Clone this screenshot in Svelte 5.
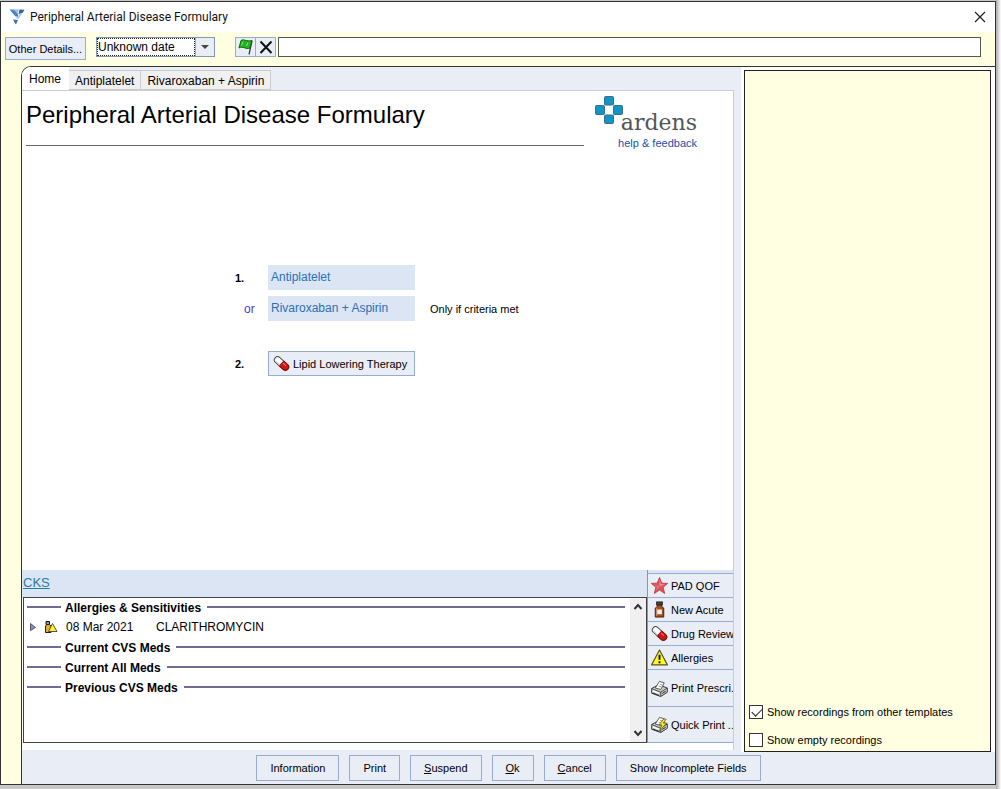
<script>
  let date = $state('Unknown date');
  let note = $state('');
  let showOther = $state(true);
  let showEmpty = $state(false);

  const tabs = ['Home', 'Antiplatelet', 'Rivaroxaban + Aspirin'];
  let active = $state('Home');

  const groups = [
    { title: 'Allergies & Sensitivities', items: [{ date: '08 Mar 2021', name: 'CLARITHROMYCIN' }] },
    { title: 'Current CVS Meds', items: [] },
    { title: 'Current All Meds', items: [] },
    { title: 'Previous CVS Meds', items: [] }
  ];

  const actions = [
    { icon: 'star', label: 'PAD QOF' },
    { icon: 'bottle', label: 'New Acute' },
    { icon: 'pill', label: 'Drug Review' },
    { icon: 'warning', label: 'Allergies' },
    { icon: 'printer', label: 'Print Prescri.', tall: true },
    { icon: 'quick', label: 'Quick Print ..', tall: true }
  ];

  const commands = [
    { rest: 'Information' },
    { rest: 'Print' },
    { key: 'S', rest: 'uspend' },
    { key: 'O', rest: 'k' },
    { key: 'C', rest: 'ancel' },
    { rest: 'Show Incomplete Fields' }
  ];
</script>

{#snippet icon(name)}
  <svg class="icon" viewBox="0 0 18 18" aria-hidden="true">
    {#if name === 'star'}
      <path d="M9 .5 11.400 6.500 17.700 6.800 12.800 10.900 14.500 17.400 9 13.800 3.500 17.400 5.200 10.900.3 6.800 6.600 6.500Z" fill="#e0525a" stroke="#b23b44" stroke-width=".9" />
      <path d="M9 2.500 10.500 7.500 15 7.800 9 10Z" fill="#ee8d90" />
      <path d="M9 10 5.200 15 6.300 10.800 2.800 7.900Z" fill="#ea7478" />
    {:else if name === 'bottle'}
      <rect x="6" y="1" width="6" height="3" fill="#444" stroke="#222" />
      <path d="M6.500 4.500h5v1.500l2 1.500v9.500h-9v-9.500l2-1.500Z" fill="#a4501e" stroke="#3b2010" />
      <rect x="6.500" y="9" width="5" height="5" fill="#f4f4f4" />
      <path d="M6 7v9" stroke="#e0905c" />
    {:else if name === 'pill'}
      <g transform="rotate(42 9 9)">
        <rect x="0" y="5.500" width="18" height="7" rx="3.500" fill="#fff" stroke="#444" />
        <path d="M9 5.500h5.500a3.500 3.500 0 0 1 0 7H9Z" fill="#d81313" stroke="#7c1010" />
        <path d="M10 7.500h4" stroke="#ff7777" />
        <path d="M3 11.500h6" stroke="#bbb" />
      </g>
    {:else if name === 'warning'}
      <path d="M9 1 17.400 16.800H.6Z" fill="#fff52e" stroke="#55551a" stroke-linejoin="round" stroke-width="1.200" />
      <path d="M9 6v5.500M9 13v2" stroke="#111" stroke-width="2" />
    {:else}
      <path d="M.7 9 8 5l9.300 3.500v4.500l-7 4.500L.7 14Z" fill="#c9c9c5" stroke="#333" stroke-linejoin="round" />
      <path d="m.7 9 9.600 4 7-4.500M10.300 13v4.500" fill="none" stroke="#444" />
      <path d="m4.500 8.500 4.500-7 5 1.500-3.500 7Z" fill="#fff" stroke="#555" stroke-linejoin="round" />
      <path d="m8 6.500 3 1M9.500 4.500l3 1" stroke="#999" />
      <path d="m2 11.500 6.500 2.700" stroke="#fff" stroke-width="1.500" />
      <path d="m2 13.800 6.500 2.500M12 14.200l3.500-2.200" stroke="#222" />
      {#if name === 'quick'}
        <path d="m13.500 3-5 6.500h3l-2.500 6.500 7.500-8.500h-3.500l3-4Z" fill="#ffe92e" stroke="#5a5210" stroke-width=".8" />
      {/if}
    {/if}
  </svg>
{/snippet}

<div class="page">
  <div class="window">
    <header class="titlebar">
      <svg class="app-icon" viewBox="0 0 16 16" aria-hidden="true">
        <path d="M.5.5H5L9 5v3L6 7Z" fill="#4b86c4" />
        <path d="M5 .5h5L8.500 4Z" fill="#8fbde6" />
        <path d="M10.500.5 15.500.8 13.500 4 9.500 5Z" fill="#2f66ab" />
        <path d="m6 7 3 1 1-3 3-.5-3 5-2 .5Z" fill="#a9cdec" />
        <path d="m4 10.500 5 .5-2 4.500-1.500-2Z" fill="#3d74b4" />
      </svg>
      <span class="caption">Peripheral Arterial Disease Formulary</span>
      <button class="close" aria-label="Close">
        <svg viewBox="0 0 12 12"><path d="m1 1 10 10M11 1 1 11" stroke="#222" stroke-width="1.200" /></svg>
      </button>
    </header>

    <div class="toolbar">
      <button class="btn details">Other Details...</button>
      <div class="picker">
        <select aria-label="Date" bind:value={date}>
          <option>Unknown date</option>
        </select>
        <span class="arrow"></span>
      </div>
      <div class="pair">
        <button class="btn tool" aria-label="Flag">
          <svg viewBox="0 0 18 18">
            <path d="M15 3 12 16.500" stroke="#333" stroke-width="1.200" />
            <path d="M4 2.500c3-2 5 1.500 11 0L13 10C9 12 6 7.500 2 10Z" fill="#20b520" stroke="#116011" />
            <path d="M6 3.500 4.500 7.500M11 4.500 9.500 8" stroke="#7fe67f" />
          </svg>
        </button>
        <button class="btn tool" aria-label="Clear">
          <svg viewBox="0 0 18 18"><path d="m3.500 3.500 11 11.500M14.500 3.500l-11 11.500" stroke="#111" stroke-width="2" /></svg>
        </button>
      </div>
      <input class="note" type="text" aria-label="Note" bind:value={note} />
    </div>

    <div class="body">
      <div class="work">
        <main class="left">
          <div class="tabs" role="tablist">
            {#each tabs as tab}
              <button role="tab" class="tab" class:active={active === tab} aria-selected={active === tab} onclick={() => (active = tab)}>{tab}</button>
            {/each}
          </div>

          <div class="sheet">
            <div class="head">
              <h1>Peripheral Arterial Disease Formulary</h1>
              <a class="brand" href="#help">
                <svg class="cross" viewBox="0 0 28 28" aria-hidden="true">
                  <g fill="#1593c4" stroke="#34718c">
                    <rect x="9.500" y=".5" width="9" height="8.500" rx="1" />
                    <rect x=".5" y="9.500" width="9" height="9" rx="1" />
                    <rect x="18.500" y="9.500" width="9" height="9" rx="1" />
                    <rect x="9.500" y="19" width="9" height="8.500" rx="1" />
                  </g>
                </svg>
                <span class="words">
                  <span class="name">ardens</span>
                  <span class="help">help &amp; feedback</span>
                </span>
              </a>
            </div>

            <div class="steps">
              <b>1.</b>
              <a class="link" href="#antiplatelet">Antiplatelet</a>
              <span></span>
              <span class="or">or</span>
              <a class="link" href="#rivaroxaban">Rivaroxaban + Aspirin</a>
              <span class="hint">Only if criteria met</span>
              <b class="second">2.</b>
              <button class="btn therapy second">{@render icon('pill')}Lipid Lowering Therapy</button>
            </div>

            <div class="dock">
              <section class="record">
                <div class="cks"><a href="#cks">CKS</a></div>
                <div class="meds">
                  <div class="list">
                    {#each groups as group}
                      <h2>{group.title}</h2>
                      {#each group.items as item}
                        <div class="entry">
                          <svg class="expand" viewBox="0 0 6 8" aria-hidden="true"><path d="M.5.5 5.500 4.500.5 7.500Z" fill="#8d8db5" stroke="#55557a" /></svg>
                          <svg class="allergy" viewBox="0 0 14 14" aria-hidden="true">
                            <path d="M2 1.500h3.500v3H2Z" fill="#999" stroke="#111" />
                            <path d="M1.500 12.500V6l1.500-1.500h2.500L7 6v6.500Z" fill="#e2ac36" stroke="#222" />
                            <path d="m8.500 3.500 4.500 8H4.500Z" fill="#fff22a" stroke="#554" />
                          </svg>
                          <span class="when">{item.date}</span>
                          <span>{item.name}</span>
                        </div>
                      {/each}
                    {/each}
                  </div>
                  <div class="scroll">
                    <svg viewBox="0 0 10 8"><path d="m1.500 6 3.500-4 3.500 4" fill="none" stroke="#333" stroke-width="2" /></svg>
                    <svg viewBox="0 0 10 8"><path d="m1.500 2 3.500 4 3.500-4" fill="none" stroke="#333" stroke-width="2" /></svg>
                  </div>
                </div>
              </section>
              <nav class="actions">
                {#each actions as action}
                  <button class:tall={action.tall}>{@render icon(action.icon)}<span>{action.label}</span></button>
                {/each}
              </nav>
            </div>
          </div>
        </main>

        <aside class="recordings">
          <label><input type="checkbox" bind:checked={showOther} />Show recordings from other templates</label>
          <label><input type="checkbox" bind:checked={showEmpty} />Show empty recordings</label>
        </aside>
      </div>

      <footer class="commands">
        {#each commands as command}
          <button class="btn command">{#if command.key}<u>{command.key}</u>{/if}{command.rest}</button>
        {/each}
      </footer>
    </div>
  </div>
</div>

<style>
  :global(body) { margin: 0; background: #fff; }
  * { box-sizing: border-box; }
  button, input, select { font: inherit; color: inherit; margin: 0; }
  .page {
    height: 100vh;
    min-height: 560px;
    padding: 1px 5px 4px 0;
    background: linear-gradient(to right, #aaa 0, #fff 5px) right / 5px 100% no-repeat, #c8c8c8;
    font: 11px/14px "Liberation Sans", Arial, sans-serif;
    color: #000;
  }
  .window {
    height: 100%;
    display: flex;
    flex-direction: column;
    border: 1px solid #333;
    background: #ffffe1;
  }
  .titlebar {
    display: flex;
    align-items: center;
    flex: none;
    height: 30px;
    padding: 0 8px;
    background: #fff;
  }
  .app-icon { width: 16px; height: 16px; margin-right: 5px; }
  .caption { flex: 1; font: 12px/16px Roboto, "Open Sans", sans-serif; color: #111; }
  .close { padding: 0; border: 0; background: none; width: 14px; height: 14px; }
  .close svg { display: block; width: 12px; height: 12px; margin: auto; }

  .btn { border: 1px solid #98acd0; background: #e9edf6; padding: 0; white-space: nowrap; }
  .toolbar {
    display: flex;
    align-items: flex-start;
    flex: none;
    height: 34px;
    padding: 5px 14px 0 4px;
  }
  .details { height: 23px; width: 81px; margin-right: 10px; }
  .picker { position: relative; width: 119px; height: 20px; margin-right: 20px; border: 1px solid #8496b8; background: #fff; }
  .picker select {
    appearance: none;
    width: 98px;
    height: 18px;
    padding: 0 0 0 1px;
    border: 0;
    background: none;
    font-size: 12px;
    outline: 1px dotted #222;
    outline-offset: -1px;
  }
  .arrow {
    position: absolute;
    top: 0;
    right: 0;
    width: 19px;
    height: 18px;
    border-left: 1px solid #98acd0;
    background: #e9edf6;
    pointer-events: none;
  }
  .arrow::after {
    content: "";
    position: absolute;
    left: 5px;
    top: 7px;
    border: 4px solid transparent;
    border-top-color: #444;
    border-bottom: 0;
  }
  .pair { display: flex; margin-right: 2px; }
  .tool { width: 21px; height: 20px; }
  .tool + .tool { margin-left: -1px; }
  .tool svg { display: block; width: 18px; height: 18px; margin: auto; }
  .note { flex: 1; min-width: 0; height: 20px; padding: 0 3px; border: 1px solid #555; background: #fff; }

  .body {
    flex: 1;
    min-height: 0;
    display: flex;
    flex-direction: column;
    margin-left: 20px;
    border: solid #333;
    border-width: 1px 0 0 1px;
    border-top-left-radius: 10px;
    background: #fff;
    overflow: hidden;
  }
  .work { flex: 1; min-height: 0; display: flex; }
  .left { flex: 1; min-width: 0; display: flex; flex-direction: column; padding: 0 7px 2px 0; background: #e9edf6; }
  .tabs { display: flex; align-items: flex-end; height: 23px; flex: none; font-size: 12px; }
  .tab { height: 20px; padding: 2px 6px 0; border: 1px solid #ccc; border-left-width: 0; background: #f0f0f0; white-space: nowrap; }
  .tab.active { height: 23px; padding: 0 8px 0 7px; border: 0; background: #fff; }
  .sheet {
    flex: 1;
    min-height: 0;
    display: flex;
    flex-direction: column;
    border: solid #ccc;
    border-width: 1px 1px 0 0;
    background: #fff;
  }
  .head { display: flex; align-items: flex-start; padding: 5px 36px 0 4px; }
  h1 { flex: 1; margin: 0 11px 0 0; height: 50px; border-bottom: 1px solid #666; font-size: 24px; font-weight: 400; line-height: 38px; white-space: nowrap; }
  .brand { display: flex; text-decoration: none; }
  .cross { width: 28px; height: 28px; margin-right: -5px; flex: none; }
  .words { display: flex; flex-direction: column; align-items: flex-end; padding-top: 14px; }
  .name { font: 300 22px/26px "DejaVu Serif", serif; color: #555; }
  .help { font-size: 11px; line-height: 14px; color: #1b4fa8; }

  .steps {
    display: grid;
    grid-template-columns: 44px 147px auto;
    row-gap: 6px;
    align-items: center;
    justify-content: start;
    padding: 115px 0 0 202px;
  }
  .steps b { padding-left: 11px; }
  .or { padding-left: 20px; font-size: 12px; color: #4a3ad0; }
  .link { height: 25px; padding-left: 3px; background: #dbe5f3; color: #2a70b8; font-size: 12px; line-height: 25px; text-decoration: none; }
  .hint { padding-left: 15px; }
  .second { margin-top: 24px; }
  .therapy { display: flex; align-items: center; height: 25px; padding: 0 4px; gap: 3px; }
  .icon { width: 17px; height: 17px; flex: none; }

  .dock { flex: none; display: flex; margin-top: auto; padding-bottom: 7px; background: linear-gradient(#dbe5f3 28px, #fff 28px); }
  .record { flex: 1; min-width: 0; display: flex; flex-direction: column; }
  .cks { height: 27px; padding: 5px 0 0 1px; font-size: 13px; line-height: 15px; }
  .cks a { color: #2a7aa8; }
  .meds { flex: 1; display: flex; margin-left: 1px; border: 1px solid #444; background: #fff; }
  .list { flex: 1; min-width: 0; padding: 0 5px 0 3px; font-size: 12px; }
  h2 { display: flex; align-items: center; gap: 6px; margin: 0; height: 20px; font-size: 12px; line-height: 20px; white-space: nowrap; }
  h2::before, h2::after { content: ""; height: 2px; margin-bottom: 3px; background: #6f6b94; }
  h2::before { width: 34px; margin-right: -2px; }
  h2::after { flex: 1; }
  .entry { display: flex; align-items: center; height: 20px; padding: 0 0 2px 3px; }
  .expand { width: 6px; height: 8px; margin-right: 8px; }
  .allergy { width: 14px; height: 14px; margin-right: 8px; }
  .when { width: 90px; }
  .scroll { display: flex; flex-direction: column; justify-content: space-between; align-items: center; width: 16px; padding: 5px 0; background: #f0f0f0; }
  .scroll svg { width: 10px; height: 8px; }

  .actions { flex: none; width: 86px; display: flex; flex-direction: column; padding-top: 3px; border-left: 1px solid #8496b8; }
  .actions button {
    display: flex;
    align-items: center;
    gap: 3px;
    height: 24px;
    padding: 0 0 0 3px;
    border: solid #98acd0;
    border-width: 1px 0 0;
    background: #e9edf6;
    white-space: nowrap;
    overflow: hidden;
  }
  .actions button.tall { height: 37px; }
  .actions button:last-child { border-bottom-width: 1px; }

  .recordings {
    flex: none;
    display: flex;
    flex-direction: column;
    justify-content: flex-end;
    gap: 14px;
    width: 247px;
    margin: 3px 4px 0 3px;
    padding: 0 5px 4px 4px;
    border: 1px solid #222;
    background: #ffffe1;
  }
  .recordings label { display: flex; align-items: center; gap: 4px; }
  .recordings input { appearance: none; width: 14px; height: 14px; border: 1px solid #333; background: #fff; }
  .recordings input:checked::after {
    content: "";
    display: block;
    width: 9px;
    height: 5px;
    margin: 2px 0 0 2px;
    border: solid #222;
    border-width: 0 0 1px 1px;
    transform: rotate(-45deg);
  }
  .commands { flex: none; display: flex; justify-content: center; gap: 10px; height: 32px; padding-top: 3px; background: #e9edf6; }
  .command { height: 26px; padding: 0 13px; }
</style>
